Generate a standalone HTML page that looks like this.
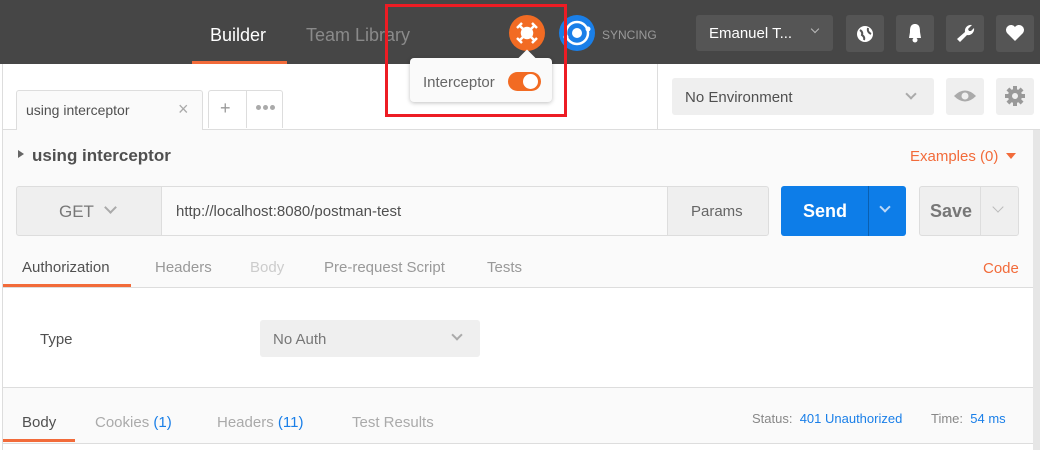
<!DOCTYPE html>
<html><head><style>
*{margin:0;padding:0;box-sizing:border-box}
body{width:1040px;height:450px;overflow:hidden;background:#fafafa;font-family:"Liberation Sans",sans-serif;position:relative;color:#505050}
.a{position:absolute}
.t{position:absolute;white-space:nowrap;margin-top:1px}
.btn{position:absolute;background:#555;border-radius:3px}
.chev{position:absolute;width:8px;height:8px;border-right:2px solid #aaa;border-bottom:2px solid #aaa;transform:rotate(45deg)}
</style></head><body>
<div class="a" style="left:0;top:0;width:1040px;height:64px;background:#464646"></div>
<div class="t" style="left:210px;top:24px;font-size:18px;color:#fff">Builder</div>
<div class="a" style="left:192px;top:61px;width:95px;height:3px;background:#f26b3a"></div>
<div class="t" style="left:306px;top:24px;font-size:18px;color:#8a8a8a">Team Library</div>
<svg class="a" style="left:509px;top:15px" width="36" height="36" viewBox="0 0 36 36"><circle cx="18" cy="18" r="18" fill="#f26b23"/><g stroke="#fff" stroke-width="2.5" fill="#fff"><line x1="11" y1="11" x2="25" y2="25"/><line x1="25" y1="11" x2="11" y2="25"/><circle cx="18" cy="18" r="5"/><line x1="8" y1="13" x2="13" y2="8"/><line x1="23" y1="8" x2="28" y2="13"/><line x1="8" y1="23" x2="13" y2="28"/><line x1="23" y1="28" x2="28" y2="23"/></g></svg>
<svg class="a" style="left:559px;top:15px" width="36" height="36" viewBox="0 0 36 36"><circle cx="18" cy="18" r="18" fill="#1a7fe8"/><circle cx="18" cy="18" r="11" fill="none" stroke="#fff" stroke-width="2.5"/><circle cx="18" cy="18" r="5" fill="#fff"/><circle cx="7" cy="22" r="2.5" fill="#fff"/><circle cx="29" cy="14" r="2.5" fill="#fff"/></svg>
<div class="t" style="left:602px;top:27px;font-size:12px;color:#999">SYNCING</div>
<div class="btn" style="left:696px;top:15px;width:137px;height:36px"></div>
<div class="t" style="left:709px;top:24px;font-size:15px;color:#fff">Emanuel T...</div>
<div class="chev" style="left:812px;top:26px;width:6px;height:6px;border-color:#bbb;border-width:1.5px"></div>
<div class="btn" style="left:846px;top:15px;width:38px;height:37px"></div>
<svg class="a" style="left:855px;top:24px" width="20" height="20"><circle cx="10" cy="10" r="8" fill="#fff"/><path d="M5 6 Q8 8 7 11 Q10 13 9 16 M13 4 Q12 8 16 10" stroke="#555" stroke-width="2" fill="none"/></svg>
<div class="btn" style="left:896px;top:15px;width:38px;height:37px"></div>
<svg class="a" style="left:905px;top:22px" width="20" height="22"><path d="M10 2 C5 2 5 7 5 10 L4 16 L16 16 L15 10 C15 7 15 2 10 2Z" fill="#fff"/><circle cx="10" cy="18" r="2.5" fill="#fff"/></svg>
<div class="btn" style="left:946px;top:15px;width:38px;height:37px"></div>
<svg class="a" style="left:955px;top:23px" width="20" height="20"><path d="M2 16 L10 9 A6 6 0 0 1 17 2 L13 6 L14 8 L16 8 L19 5 A6 6 0 0 1 12 12 L5 19Z" fill="#fff"/></svg>
<div class="btn" style="left:996px;top:15px;width:38px;height:37px"></div>
<svg class="a" style="left:1005px;top:24px" width="20" height="18"><path d="M10 17 L2 9 A4.5 4.5 0 0 1 10 3 A4.5 4.5 0 0 1 18 9Z" fill="#fff"/></svg>
<div class="a" style="left:3px;top:64px;width:1037px;height:66px;background:#fff;border-bottom:1px solid #ddd"></div>
<div class="a" style="left:657px;top:64px;width:1px;height:66px;background:#ddd"></div>
<div class="a" style="left:16px;top:90px;width:187px;height:40px;background:#fafafa;border:1px solid #ddd;border-bottom:none;border-radius:3px 3px 0 0"></div>
<div class="t" style="left:26px;top:101px;font-size:14px;color:#505050">using interceptor</div>
<div class="t" style="left:178px;top:98px;font-size:18px;color:#aaa">×</div>
<div class="a" style="left:208px;top:90px;width:75px;height:38px;border:1px solid #ddd;border-bottom:none;border-radius:3px 3px 0 0"></div>
<div class="a" style="left:246px;top:90px;width:1px;height:38px;background:#ddd"></div>
<div class="t" style="left:220px;top:97px;font-size:18px;color:#999">+</div>
<div class="a" style="left:256px;top:105px;width:5px;height:5px;border-radius:50%;background:#aaa"></div>
<div class="a" style="left:263px;top:105px;width:5px;height:5px;border-radius:50%;background:#aaa"></div>
<div class="a" style="left:270px;top:105px;width:5px;height:5px;border-radius:50%;background:#aaa"></div>
<div class="a" style="left:672px;top:78px;width:262px;height:37px;background:#efefef;border-radius:3px"></div>
<div class="t" style="left:685px;top:88px;font-size:15px;color:#505050">No Environment</div>
<div class="chev" style="left:907px;top:90px"></div>
<div class="a" style="left:946px;top:78px;width:38px;height:37px;background:#efefef;border-radius:3px"></div>
<svg class="a" style="left:953px;top:88px" width="24" height="16"><path d="M1 8 Q12 -3 23 8 Q12 19 1 8Z" fill="#aaa"/><circle cx="12" cy="8" r="3.5" fill="#efefef"/></svg>
<div class="a" style="left:996px;top:78px;width:38px;height:37px;background:#efefef;border-radius:3px"></div>
<svg class="a" style="left:1004px;top:85px" width="22" height="22" viewBox="0 0 22 22"><g fill="#999"><circle cx="11" cy="11" r="7"/><rect x="9" y="1" width="4" height="20"/><rect x="1" y="9" width="20" height="4"/><rect x="9" y="1" width="4" height="20" transform="rotate(45 11 11)"/><rect x="9" y="1" width="4" height="20" transform="rotate(-45 11 11)"/></g><circle cx="11" cy="11" r="3" fill="#efefef"/></svg>
<div class="a" style="left:0;top:64px;width:3px;height:386px;background:#fff;border-right:1px solid #ddd"></div>
<div class="a" style="left:1033px;top:130px;width:7px;height:320px;background:#e6e6e6"></div>
<div class="a" style="left:18px;top:150px;border-left:6px solid #666;border-top:4px solid transparent;border-bottom:4px solid transparent"></div>
<div class="t" style="left:32px;top:145px;font-size:17px;font-weight:bold;color:#505050">using interceptor</div>
<div class="t" style="left:910px;top:147px;font-size:15px;color:#f26b3a">Examples (0)</div>
<div class="a" style="left:1006px;top:153px;border-top:6px solid #f26b3a;border-left:5px solid transparent;border-right:5px solid transparent"></div>
<div class="a" style="left:16px;top:186px;width:753px;height:50px;background:#efefef;border:1px solid #ddd;border-radius:3px"></div>
<div class="a" style="left:161px;top:187px;width:1px;height:48px;background:#ddd"></div>
<div class="a" style="left:162px;top:187px;width:505px;height:48px;background:#fafafa"></div>
<div class="a" style="left:667px;top:187px;width:1px;height:48px;background:#ddd"></div>
<div class="t" style="left:59px;top:201px;font-size:17px;color:#777">GET</div>
<div class="chev" style="left:106px;top:203px;width:9px;height:9px;border-color:#aaa"></div>
<div class="t" style="left:176px;top:202px;font-size:15px;color:#505050">http://localhost:8080/postman-test</div>
<div class="t" style="left:691px;top:202px;font-size:15px;color:#666">Params</div>
<div class="a" style="left:781px;top:186px;width:125px;height:50px;background:#0d7de8;border-radius:3px"></div>
<div class="a" style="left:868px;top:186px;width:1px;height:50px;background:#0a5fb0"></div>
<div class="t" style="left:803px;top:200px;font-size:18px;font-weight:bold;color:#fff">Send</div>
<div class="chev" style="left:881px;top:203px;border-color:#bcd8f7"></div>
<div class="a" style="left:919px;top:186px;width:100px;height:50px;background:#efefef;border:1px solid #ddd;border-radius:3px"></div>
<div class="a" style="left:980px;top:186px;width:1px;height:50px;background:#ddd"></div>
<div class="t" style="left:930px;top:200px;font-size:18px;font-weight:bold;color:#777">Save</div>
<div class="chev" style="left:994px;top:203px;border-color:#bbb;border-width:1.5px"></div>
<div class="t" style="left:22px;top:258px;font-size:15px;color:#505050">Authorization</div>
<div class="t" style="left:155px;top:258px;font-size:15px;color:#999">Headers</div>
<div class="t" style="left:250px;top:258px;font-size:15px;color:#ccc">Body</div>
<div class="t" style="left:324px;top:258px;font-size:15px;color:#999">Pre-request Script</div>
<div class="t" style="left:487px;top:258px;font-size:15px;color:#999">Tests</div>
<div class="t" style="left:983px;top:259px;font-size:15px;color:#f26b3a">Code</div>
<div class="a" style="left:3px;top:284px;width:128px;height:3px;background:#f26b3a"></div>
<div class="a" style="left:3px;top:287px;width:1030px;height:101px;background:#fff;border-top:1px solid #ddd;border-bottom:1px solid #ddd"></div>
<div class="t" style="left:40px;top:330px;font-size:15px;color:#505050">Type</div>
<div class="a" style="left:260px;top:320px;width:220px;height:37px;background:#efefef;border-radius:3px"></div>
<div class="t" style="left:273px;top:330px;font-size:15px;color:#777">No Auth</div>
<div class="chev" style="left:453px;top:331px"></div>
<div class="t" style="left:22px;top:413px;font-size:15px;color:#505050">Body</div>
<div class="t" style="left:95px;top:413px;font-size:15px;color:#aaa">Cookies <span style="color:#1a7fe8">(1)</span></div>
<div class="t" style="left:217px;top:413px;font-size:15px;color:#aaa">Headers <span style="color:#1a7fe8">(11)</span></div>
<div class="t" style="left:352px;top:413px;font-size:15px;color:#aaa">Test Results</div>
<div class="t" style="left:752px;top:410px;font-size:13px;color:#888">Status: <span style="color:#1a7fe8">&nbsp;401 Unauthorized</span></div>
<div class="t" style="left:931px;top:410px;font-size:13px;color:#888">Time: <span style="color:#1a7fe8">&nbsp;54 ms</span></div>
<div class="a" style="left:3px;top:439px;width:72px;height:3px;background:#f26b3a"></div>
<div class="a" style="left:3px;top:443px;width:1030px;height:1px;background:#ddd"></div>
<div class="a" style="left:3px;top:444px;width:1030px;height:6px;background:#fff"></div>
<div class="a" style="left:410px;top:58px;width:142px;height:44px;background:#fafafa;border-radius:4px;box-shadow:0 1px 4px rgba(0,0,0,.25)"></div>
<div class="a" style="left:521px;top:52px;width:12px;height:12px;background:#fafafa;transform:rotate(45deg)"></div>
<div class="t" style="left:423px;top:73px;font-size:15px;color:#666">Interceptor</div>
<div class="a" style="left:508px;top:72px;width:33px;height:19px;background:#f26b23;border-radius:10px"></div>
<div class="a" style="left:523px;top:74px;width:15px;height:15px;background:#fff;border-radius:50%"></div>
<div class="a" style="left:385px;top:4px;width:182px;height:113px;border:3px solid #ed1c24"></div>
</body></html>
